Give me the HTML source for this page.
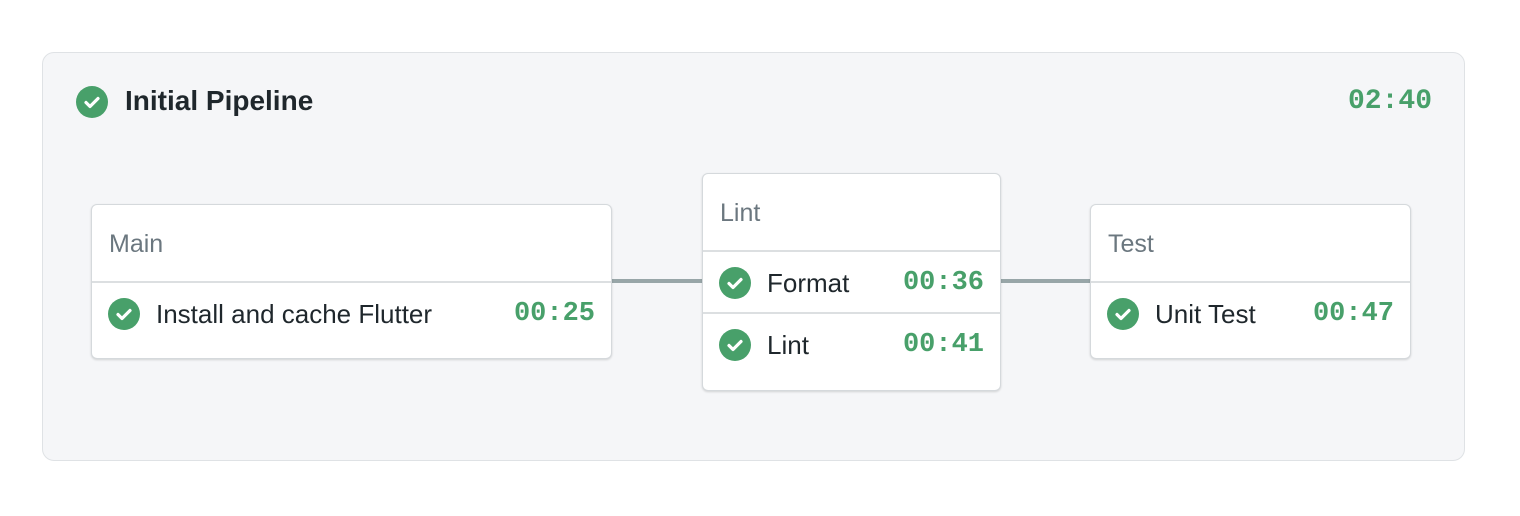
<!DOCTYPE html>
<html><head><style>
body{margin:0;width:1520px;height:516px;background:#fff;font-family:"Liberation Sans",sans-serif;position:relative;overflow:hidden}
.outer{position:absolute;left:42px;top:52px;width:1421px;height:407px;background:#f5f6f8;border:1px solid #dfe2e5;border-radius:12px}
.ic{position:absolute;width:32px;height:32px;border-radius:50%;background:#48a06a}
.ic svg{position:absolute;left:0;top:0}
.card{position:absolute;background:#fff;border:1px solid #d5d9dc;border-radius:6px;box-shadow:0 1px 2px rgba(0,0,0,.15)}
.hd{position:absolute;left:17px;font-size:25px;color:#6b777f}
.sep{position:absolute;left:0;right:0;height:2px;background:#dcdfe1}
.nm{position:absolute;font-size:26px;color:#1f272c}
.tm{position:absolute;right:16px;font-family:"Liberation Mono",monospace;font-size:27px;color:#48a06a;font-weight:bold}
.line{position:absolute;height:4px;background:#98a6a8;top:279px}
</style></head><body>
<div class="outer"></div>
<div class="ic" style="left:76px;top:86px"><svg width="32" height="32"><path d="M10 16.5l4 4 8-8" stroke="#fff" stroke-width="3.2" fill="none" stroke-linecap="round" stroke-linejoin="round"/></svg></div>
<div style="position:absolute;left:125px;top:85px;font-size:28px;font-weight:bold;color:#1f272c">Initial Pipeline</div>
<div style="position:absolute;right:88px;top:86px;font-family:'Liberation Mono',monospace;font-size:28px;color:#48a06a;font-weight:bold">02:40</div>
<div class="line" style="left:611px;width:92px"></div>
<div class="line" style="left:1000px;width:91px"></div>

<div class="card" style="left:91px;top:204px;width:519px;height:153px">
<div class="hd" style="top:25px">Main</div>
<div class="sep" style="top:76px"></div>
<div class="ic" style="left:16px;top:93px"><svg width="32" height="32"><path d="M10 16.5l4 4 8-8" stroke="#fff" stroke-width="3.2" fill="none" stroke-linecap="round" stroke-linejoin="round"/></svg></div>
<div class="nm" style="left:64px;top:94px">Install and cache Flutter</div>
<div class="tm" style="top:94px">00:25</div>
</div>

<div class="card" style="left:702px;top:173px;width:297px;height:216px">
<div class="hd" style="top:25px">Lint</div>
<div class="sep" style="top:76px"></div>
<div class="ic" style="left:16px;top:93px"><svg width="32" height="32"><path d="M10 16.5l4 4 8-8" stroke="#fff" stroke-width="3.2" fill="none" stroke-linecap="round" stroke-linejoin="round"/></svg></div>
<div class="nm" style="left:64px;top:94px">Format</div>
<div class="tm" style="top:94px">00:36</div>
<div class="sep" style="top:138px"></div>
<div class="ic" style="left:16px;top:155px"><svg width="32" height="32"><path d="M10 16.5l4 4 8-8" stroke="#fff" stroke-width="3.2" fill="none" stroke-linecap="round" stroke-linejoin="round"/></svg></div>
<div class="nm" style="left:64px;top:156px">Lint</div>
<div class="tm" style="top:156px">00:41</div>
</div>

<div class="card" style="left:1090px;top:204px;width:319px;height:153px">
<div class="hd" style="top:25px">Test</div>
<div class="sep" style="top:76px"></div>
<div class="ic" style="left:16px;top:93px"><svg width="32" height="32"><path d="M10 16.5l4 4 8-8" stroke="#fff" stroke-width="3.2" fill="none" stroke-linecap="round" stroke-linejoin="round"/></svg></div>
<div class="nm" style="left:64px;top:94px">Unit Test</div>
<div class="tm" style="top:94px">00:47</div>
</div>
</body></html>
